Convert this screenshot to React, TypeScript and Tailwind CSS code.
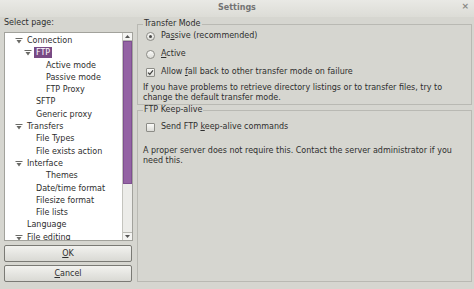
import React from 'react';

type Node = { label: string; level: number; open?: boolean; selected?: boolean };

const tree: Node[] = [
  { label: 'Connection', level: 0, open: true },
  { label: 'FTP', level: 1, open: true, selected: true },
  { label: 'Active mode', level: 2 },
  { label: 'Passive mode', level: 2 },
  { label: 'FTP Proxy', level: 2 },
  { label: 'SFTP', level: 1 },
  { label: 'Generic proxy', level: 1 },
  { label: 'Transfers', level: 0, open: true },
  { label: 'File Types', level: 1 },
  { label: 'File exists action', level: 1 },
  { label: 'Interface', level: 0, open: true },
  { label: 'Themes', level: 2 },
  { label: 'Date/time format', level: 1 },
  { label: 'Filesize format', level: 1 },
  { label: 'File lists', level: 1 },
  { label: 'Language', level: 0 },
  { label: 'File editing', level: 0, open: true },
];

const indent = ['pl-[22px]', 'pl-[31px]', 'pl-[41px]'];

function Expander() {
  return (
    <svg width="8" height="6" viewBox="0 0 8 6" className="absolute -left-[12px] top-[3px]">
      <path d="M0.5 0.5 H7.5" stroke="#6a6a66" strokeWidth="1" />
      <path d="M1.5 2 L6.5 2 L4 5.5 Z" fill="#6a6a66" />
    </svg>
  );
}

function Radio({ on }: { on?: boolean }) {
  return (
    <span className="w-[9px] h-[9px] rounded-full border border-[#8c8c87] bg-gradient-to-b from-[#fafaf8] to-[#dcdcd7] flex items-center justify-center">
      {on && <span className="w-[3px] h-[3px] rounded-full bg-[#4a4a48]" />}
    </span>
  );
}

function Check({ on }: { on?: boolean }) {
  return (
    <span className="w-[9px] h-[9px] rounded-[1px] border border-[#8c8c87] bg-gradient-to-b from-[#fafaf8] to-[#dcdcd7] flex items-center justify-center">
      {on && (
        <svg width="7" height="7" viewBox="0 0 7 7">
          <path d="M1 3.6 L2.8 5.3 L6 1.4" stroke="#3e3e3c" strokeWidth="1.2" fill="none" />
        </svg>
      )}
    </span>
  );
}

function Btn({ first, rest }: { first: string; rest: string }) {
  return (
    <button className="h-[17px] w-full rounded-[2px] border border-[#7a7a75] bg-gradient-to-b from-[#f2f2ef] to-[#d9d9d4] text-[8px] text-[#2e2e2e] leading-none">
      <span className="underline underline-offset-1">{first}</span>
      {rest}
    </button>
  );
}

export default function App() {
  return (
    <div
      className="w-[474px] h-[289px] bg-[#d6d6d0] flex flex-col overflow-hidden text-[8px] text-[#2e2e2e]"
      style={{ fontFamily: '"DejaVu Sans", sans-serif' }}
    >
      <div className="h-[17px] shrink-0 bg-gradient-to-b from-[#e9e9e5] to-[#dcdcd6] flex items-center relative">
        <span className="flex-1 text-center font-bold text-[#737373] leading-none -mt-[2px]">Settings</span>
        <span className="absolute right-[5px] top-[2px] text-[#8a8a86] text-[9px] font-bold leading-none">×</span>
      </div>

      <div className="flex flex-1 min-h-0">
        <div className="w-[133px] shrink-0 pl-[4px] flex flex-col">
          <div className="leading-[10px] mt-[1px]">Select page:</div>
          <div className="mt-[4px] h-[209px] border border-[#a2a29c] bg-white flex">
            <div className="flex-1 pt-[2px] overflow-hidden">
              {tree.map((n) => (
                <div key={n.label} className={`h-[12.3px] leading-[12.3px] whitespace-nowrap ${indent[n.level]}`}>
                  <span className="relative inline-block">
                    {n.open && <Expander />}
                    {n.selected ? (
                      <span className="bg-[#784a84] text-white px-[2px] -ml-[2px] py-[1px]">{n.label}</span>
                    ) : (
                      n.label
                    )}
                  </span>
                </div>
              ))}
            </div>
            <div className="w-[10px] border-l border-[#c4c4be] bg-[#ecece9] flex flex-col">
              <div className="h-[8px] border-b border-[#b8b8b2] bg-[#f4f4f2] flex items-center justify-center">
                <svg width="5" height="3" viewBox="0 0 5 3"><path d="M0 3 L2.5 0 L5 3 Z" fill="#555" /></svg>
              </div>
              <div className="h-[143px] bg-[#9463a4] border border-[#7e5090]" />
              <div className="flex-1" />
              <div className="h-[8px] border-t border-[#b8b8b2] bg-[#f4f4f2] flex items-center justify-center">
                <svg width="5" height="3" viewBox="0 0 5 3"><path d="M0 0 L2.5 3 L5 0 Z" fill="#555" /></svg>
              </div>
            </div>
          </div>
          <div className="mt-[4px] flex flex-col gap-[3px] pr-[1px]">
            <Btn first="O" rest="K" />
            <Btn first="C" rest="ancel" />
          </div>
        </div>

        <div className="flex-1 pl-[4px] pr-[2px] pb-[7px] flex flex-col">
          <fieldset className="mt-[3px] border border-[#b9b9b3] pl-[5px] pr-[4px] pb-[2px]">
            <legend className="px-px leading-[8px]">Transfer Mode</legend>
            <div className="ml-[3px] mt-[1px] flex flex-col gap-[4px]">
              <div className="h-[14px] flex items-center gap-[6px]">
                <Radio on />
                <span>Pa<span className="underline underline-offset-1">s</span>sive (recommended)</span>
              </div>
              <div className="h-[14px] flex items-center gap-[6px]">
                <Radio />
                <span><span className="underline underline-offset-1">A</span>ctive</span>
              </div>
              <div className="h-[14px] flex items-center gap-[6px]">
                <Check on />
                <span>Allow <span className="underline underline-offset-1">f</span>all back to other transfer mode on failure</span>
              </div>
            </div>
            <p className="mt-[4px] leading-[9.5px]">
              If you have problems to retrieve directory listings or to transfer files, try to
              <br />
              change the default transfer mode.
            </p>
          </fieldset>

          <fieldset className="mt-[1px] flex-1 border border-[#b9b9b3] pl-[5px] pr-[4px]">
            <legend className="px-px leading-[8px]">FTP Keep-alive</legend>
            <div className="ml-[3px] mt-[6px] h-[14px] flex items-center gap-[6px]">
              <Check />
              <span>Send FTP <span className="underline underline-offset-1">k</span>eep-alive commands</span>
            </div>
            <p className="mt-[12px] leading-[10px]">
              A proper server does not require this. Contact the server administrator if you
              <br />
              need this.
            </p>
          </fieldset>
        </div>
      </div>
    </div>
  );
}
